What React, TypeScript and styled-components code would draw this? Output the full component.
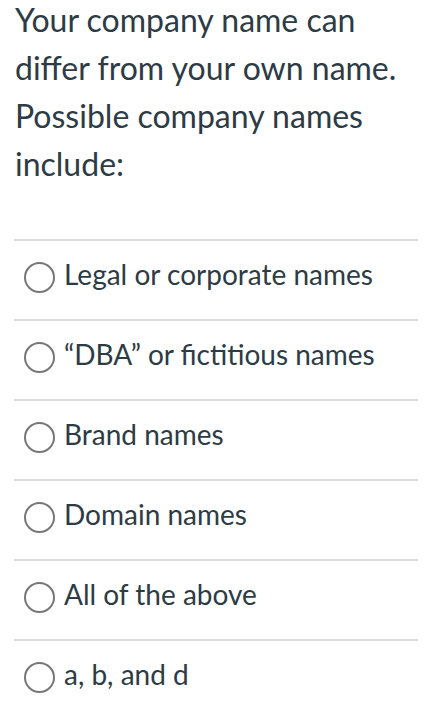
import React from 'react';
import styled, { createGlobalStyle } from 'styled-components';

const GlobalStyle = createGlobalStyle`
  html, body {
    margin: 0;
    padding: 0;
    background: #fff;
  }
  body {
    font-family: Lato, "Open Sans", sans-serif;
    color: #2d3b45;
  }
`;

const Container = styled.div`
  padding: 0 14px;
`;

const Question = styled.p`
  margin: -4px 0 51px 1px;
  font-size: 32px;
  line-height: 48px;
`;

const Options = styled.ul`
  list-style: none;
  margin: 0;
  padding: 0;
`;

const Option = styled.li`
  display: flex;
  align-items: center;
  gap: 9px;
  height: 72px;
  padding: 0 0 6px 10px;
  border-top: 2px solid #dcdcdc;
`;

const Radio = styled.span`
  flex: none;
  width: 27px;
  height: 27px;
  border: 2px solid #777;
  border-radius: 50%;
`;

const Label = styled.span`
  font-size: 28px;
  line-height: 32px;
  margin-bottom: 6px;
`;

const options = [
  'Legal or corporate names',
  '\u201CDBA\u201D or fictitious names',
  'Brand names',
  'Domain names',
  'All of the above',
  'a, b, and d',
];

const App: React.FC = () => {
  return (
    <Container>
      <GlobalStyle />
      <Question>
        Your company name can differ from your own name. Possible company names include:
      </Question>
      <Options>
        {options.map((o) => (
          <Option key={o}>
            <Radio />
            <Label>{o}</Label>
          </Option>
        ))}
      </Options>
    </Container>
  );
};

export default App;
